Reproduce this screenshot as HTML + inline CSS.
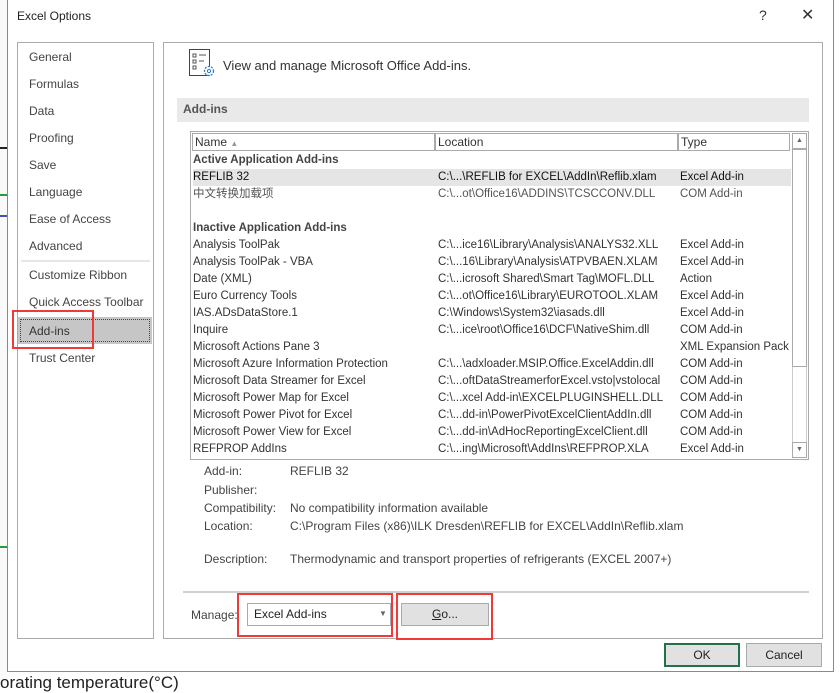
<!DOCTYPE html>
<html><head><meta charset="utf-8"><style>
*{box-sizing:border-box;margin:0;padding:0}
body{width:840px;height:685px;position:relative;background:#fff;font-family:"Liberation Sans","Noto Sans CJK SC",sans-serif;font-size:12px;color:#444;overflow:hidden}
.a{position:absolute;white-space:nowrap}
.dlg{position:absolute;left:7px;top:-1px;width:827px;height:673px;border:1px solid #8a8a8a;background:#fff}
.nav div{position:absolute;left:29px;font-size:12px;color:#444}
.row{position:absolute;left:193px;width:598px;height:17px;line-height:17px;font-size:11.5px;color:#333}
.row span{position:absolute;top:0}
.row .l{left:245px}.row .t{left:487px}
.hd{position:absolute;top:134px;height:16px;border:1px solid #fff;outline:1px solid #aaa;line-height:14px;font-size:12px;color:#333;padding-left:1px}
.det{position:absolute;font-size:12px;color:#444}
</style></head><body>
<div class="a" style="left:0;top:0;width:7px;height:685px;background:#fafafa"></div>
<div class="a" style="left:0;top:147px;width:7px;height:2px;background:#222"></div>
<div class="a" style="left:0;top:194px;width:7px;height:2px;background:#2a9a3a"></div>
<div class="a" style="left:0;top:215px;width:7px;height:2px;background:#3a5aa8"></div>
<div class="a" style="left:0;top:546px;width:7px;height:2px;background:#2a9a3a"></div>
<div class="a" style="left:0;top:673px;font-size:17px;color:#222">orating temperature(°C)</div>
<div class="dlg"></div>
<div class="a" style="left:17px;top:9px;font-size:12px;color:#222">Excel Options</div>
<div class="a" style="left:759px;top:7px;font-size:14px;color:#333">?</div>
<div class="a" style="left:801px;top:5px;font-size:16px;color:#333">✕</div>

<div class="a" style="left:17px;top:42px;width:137px;height:597px;border:1px solid #ababab"></div>
<div class="nav">
<div style="top:50px">General</div><div style="top:77px">Formulas</div><div style="top:104px">Data</div>
<div style="top:131px">Proofing</div><div style="top:158px">Save</div><div style="top:185px">Language</div>
<div style="top:212px">Ease of Access</div><div style="top:239px">Advanced</div>
<div style="top:268px">Customize Ribbon</div><div style="top:295px">Quick Access Toolbar</div>
<div style="top:351px">Trust Center</div>
</div>
<div class="a" style="left:21px;top:260px;width:129px;height:2px;background:#e6e6e6"></div>
<div class="a" style="left:18px;top:317px;width:134px;height:27px;background:#c6c6c6"></div>
<div class="a" style="left:20px;top:319px;width:130px;height:23px;border:1px dotted #444"></div>
<div class="a" style="left:29px;top:324px;color:#333">Add-ins</div>
<div class="a" style="left:12px;top:310px;width:82px;height:39px;border:2px solid #f03a3a"></div>

<div class="a" style="left:163px;top:42px;width:660px;height:597px;border:1px solid #ababab"></div>
<svg class="a" style="left:189px;top:49px" width="30" height="30" viewBox="0 0 30 30"><rect x="0.5" y="0.5" width="20" height="26" fill="none" stroke="#444"/><rect x="4" y="5" width="3" height="3" fill="none" stroke="#555"/><rect x="4" y="11" width="3" height="3" fill="none" stroke="#555"/><rect x="4" y="17" width="3" height="3" fill="none" stroke="#555"/><path d="M10 6h7M10 12h5" stroke="#555"/><circle cx="20" cy="22" r="4.5" fill="#fff" stroke="#2b79c8" stroke-width="1.3" stroke-dasharray="2 1.3"/><circle cx="20" cy="22" r="1.6" fill="none" stroke="#2b79c8"/></svg>
<div class="a" style="left:223px;top:58px;font-size:13px;color:#333">View and manage Microsoft Office Add-ins.</div>
<div class="a" style="left:177px;top:98px;width:632px;height:24px;background:#e9e9e9"></div>
<div class="a" style="left:183px;top:102px;font-weight:bold;color:#555">Add-ins</div>

<div class="a" style="left:190px;top:131px;width:619px;height:329px;border:1px solid #ababab"></div>
<div class="hd" style="left:193px;width:241px">Name <span style="font-size:8px;color:#999">▲</span></div>
<div class="hd" style="left:436px;width:241px">Location</div>
<div class="hd" style="left:679px;width:110px">Type</div>
<div class="a" style="left:792px;top:133px;width:15px;height:325px;border:1px solid #ccc;background:#fff"></div>
<div class="a" style="left:792px;top:133px;width:15px;height:16px;border:1px solid #aaa;font-size:7px;text-align:center;line-height:14px;color:#666">▲</div>
<div class="a" style="left:792px;top:149px;width:15px;height:218px;border:1px solid #aaa;background:#fff"></div>
<div class="a" style="left:792px;top:442px;width:15px;height:16px;border:1px solid #aaa;font-size:7px;text-align:center;line-height:14px;color:#666">▼</div>

<div class="row" style="top:152px;font-weight:bold;color:#444"><span>Active Application Add-ins</span></div>
<div class="row" style="top:169px;background:#e5e5e5;color:#111"><span>REFLIB 32</span><span class="l">C:\...\REFLIB for EXCEL\AddIn\Reflib.xlam</span><span class="t">Excel Add-in</span></div>
<div class="row" style="top:186px;color:#555"><span>中文转换加载项</span><span class="l">C:\...ot\Office16\ADDINS\TCSCCONV.DLL</span><span class="t">COM Add-in</span></div>
<div class="row" style="top:220px;font-weight:bold;color:#444"><span>Inactive Application Add-ins</span></div>
<div class="row" style="top:237px"><span>Analysis ToolPak</span><span class="l">C:\...ice16\Library\Analysis\ANALYS32.XLL</span><span class="t">Excel Add-in</span></div>
<div class="row" style="top:254px"><span>Analysis ToolPak - VBA</span><span class="l">C:\...16\Library\Analysis\ATPVBAEN.XLAM</span><span class="t">Excel Add-in</span></div>
<div class="row" style="top:271px"><span>Date (XML)</span><span class="l">C:\...icrosoft Shared\Smart Tag\MOFL.DLL</span><span class="t">Action</span></div>
<div class="row" style="top:288px"><span>Euro Currency Tools</span><span class="l">C:\...ot\Office16\Library\EUROTOOL.XLAM</span><span class="t">Excel Add-in</span></div>
<div class="row" style="top:305px"><span>IAS.ADsDataStore.1</span><span class="l">C:\Windows\System32\iasads.dll</span><span class="t">Excel Add-in</span></div>
<div class="row" style="top:322px"><span>Inquire</span><span class="l">C:\...ice\root\Office16\DCF\NativeShim.dll</span><span class="t">COM Add-in</span></div>
<div class="row" style="top:339px"><span>Microsoft Actions Pane 3</span><span class="t">XML Expansion Pack</span></div>
<div class="row" style="top:356px"><span>Microsoft Azure Information Protection</span><span class="l">C:\...\adxloader.MSIP.Office.ExcelAddin.dll</span><span class="t">COM Add-in</span></div>
<div class="row" style="top:373px"><span>Microsoft Data Streamer for Excel</span><span class="l">C:\...oftDataStreamerforExcel.vsto|vstolocal</span><span class="t">COM Add-in</span></div>
<div class="row" style="top:390px"><span>Microsoft Power Map for Excel</span><span class="l">C:\...xcel Add-in\EXCELPLUGINSHELL.DLL</span><span class="t">COM Add-in</span></div>
<div class="row" style="top:407px"><span>Microsoft Power Pivot for Excel</span><span class="l">C:\...dd-in\PowerPivotExcelClientAddIn.dll</span><span class="t">COM Add-in</span></div>
<div class="row" style="top:424px"><span>Microsoft Power View for Excel</span><span class="l">C:\...dd-in\AdHocReportingExcelClient.dll</span><span class="t">COM Add-in</span></div>
<div class="row" style="top:441px"><span>REFPROP AddIns</span><span class="l">C:\...ing\Microsoft\AddIns\REFPROP.XLA</span><span class="t">Excel Add-in</span></div>

<div class="det" style="left:204px;top:464px">Add-in:</div><div class="det" style="left:290px;top:464px">REFLIB 32</div>
<div class="det" style="left:204px;top:483px">Publisher:</div>
<div class="det" style="left:204px;top:501px">Compatibility:</div><div class="det" style="left:290px;top:501px">No compatibility information available</div>
<div class="det" style="left:204px;top:519px">Location:</div><div class="det" style="left:290px;top:519px">C:\Program Files (x86)\ILK Dresden\REFLIB for EXCEL\AddIn\Reflib.xlam</div>
<div class="det" style="left:204px;top:552px">Description:</div><div class="det" style="left:290px;top:552px">Thermodynamic and transport properties of refrigerants (EXCEL 2007+)</div>

<div class="a" style="left:183px;top:591px;width:626px;height:2px;background:#d0d0d0"></div>
<div class="det" style="left:191px;top:608px">Manage:</div>
<div class="a" style="left:247px;top:603px;width:144px;height:23px;border:1px solid #aaa;background:#fff"></div>
<div class="a" style="left:254px;top:607px;color:#222">Excel Add-ins</div>
<div class="a" style="left:379px;top:609px;font-size:8px;color:#666">▼</div>
<div class="a" style="left:237px;top:593px;width:156px;height:44px;border:2px solid #f03a3a"></div>
<div class="a" style="left:401px;top:603px;width:88px;height:23px;border:1px solid #aaa;background:#e1e1e1;text-align:center;line-height:21px;color:#222"><u>G</u>o...</div>
<div class="a" style="left:396px;top:593px;width:97px;height:47px;border:2px solid #f03a3a"></div>

<div class="a" style="left:664px;top:643px;width:76px;height:24px;border:2px solid #217346;background:#e1e1e1;text-align:center;line-height:20px;color:#222">OK</div>
<div class="a" style="left:746px;top:643px;width:76px;height:24px;border:1px solid #aaa;background:#e1e1e1;text-align:center;line-height:22px;color:#222">Cancel</div>
</body></html>
